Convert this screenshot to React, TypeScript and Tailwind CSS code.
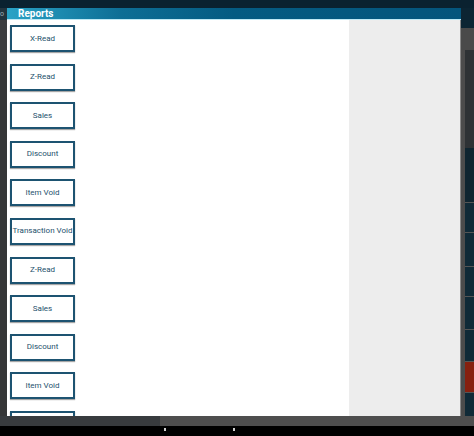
import React from "react";

const items = [
  "X-Read",
  "Z-Read",
  "Sales",
  "Discount",
  "Item Void",
  "Transaction Void",
  "Z-Read",
  "Sales",
  "Discount",
  "Item Void",
  "",
];

export default function App() {
  return (
    <div
      className="w-[474px] h-[436px] overflow-hidden bg-[#0b2432] flex flex-col"
      style={{ fontFamily: "Roboto, 'Liberation Sans', sans-serif" }}
    >
      {/* top band of the dimmed app */}
      <div className="h-[8px] shrink-0 bg-[#0a2230]" />
      <div className="flex h-[408px] shrink-0">
        {/* left dimmed strip */}
        <div className="w-[7px] shrink-0 flex flex-col">
          <div className="h-[12px] bg-[#22343e] text-[7px] leading-[12px] text-[#9fb0b8] overflow-hidden">o</div>
          <div className="h-[40px] bg-[#3c3d3f]" />
          <div className="flex-1 bg-[#353637]" />
        </div>
        {/* dialog */}
        <div className="w-[454px] shrink-0 flex flex-col">
          <div className="h-[12px] shrink-0 bg-[linear-gradient(90deg,#2aa3c6_0%,#0d6e95_25%,#045b82_50%,#04557c_100%)] flex items-center pl-[11px] border-b border-[#bfe9f5]">
            <span className="text-white font-bold text-[10px] leading-none">Reports</span>
          </div>
          <div className="flex flex-1 min-h-0">
            <div className="w-[342px] bg-white overflow-hidden pl-[3px] pt-[5px] flex flex-col gap-[11.6px]">
              {items.map((t, i) => (
                <div
                  key={i}
                  className="w-[65px] h-[27px] shrink-0 border-2 border-[#1d5371] bg-white shadow-[0_1px_1px_rgba(0,0,0,0.35)] flex items-center justify-center text-[8px] text-[#24506c] whitespace-nowrap"
                >
                  {t}
                </div>
              ))}
            </div>
            <div className="flex-1 bg-[#ededed] border-r border-[#8a8a8a]" />
          </div>
        </div>
        {/* right dimmed strip */}
        <div className="flex-1 flex flex-col">
          <div className="h-[20px] bg-[#0c2533]" />
          <div className="h-[22px] bg-[#4a4a4a]" />
          <div className="flex-1 flex">
            <div className="w-[4px] bg-[#4c4c4c]" />
            <div className="flex-1 flex flex-col bg-[#555]">
              <div className="h-[98px] bg-[#2e3235]" />
              <div className="h-[54px] bg-[#0f2530] mb-[1px]" />
              <div className="h-[29px] bg-[#102a37] mb-[1px]" />
              <div className="h-[33px] bg-[#102a37] mb-[1px]" />
              <div className="h-[29px] bg-[#102a37] mb-[1px]" />
              <div className="h-[32px] bg-[#102a37] mb-[1px]" />
              <div className="h-[31px] bg-[#102a37] mb-[1px]" />
              <div className="h-[30px] bg-[#86200f] mb-[1px]" />
              <div className="flex-1 bg-[#102a37]" />
            </div>
          </div>
        </div>
      </div>
      {/* bottom */}
      <div className="h-[10px] shrink-0 flex">
        <div className="w-[160px] bg-[#383b3e]" />
        <div className="flex-1 bg-[#4e4e4e]" />
      </div>
      <div className="flex-1 bg-black relative">
        <div className="absolute left-[164px] top-[2px] w-[2px] h-[3px] bg-[#cfcfcf]" />
        <div className="absolute left-[233px] top-[2px] w-[2px] h-[3px] bg-[#cfcfcf]" />
      </div>
    </div>
  );
}
